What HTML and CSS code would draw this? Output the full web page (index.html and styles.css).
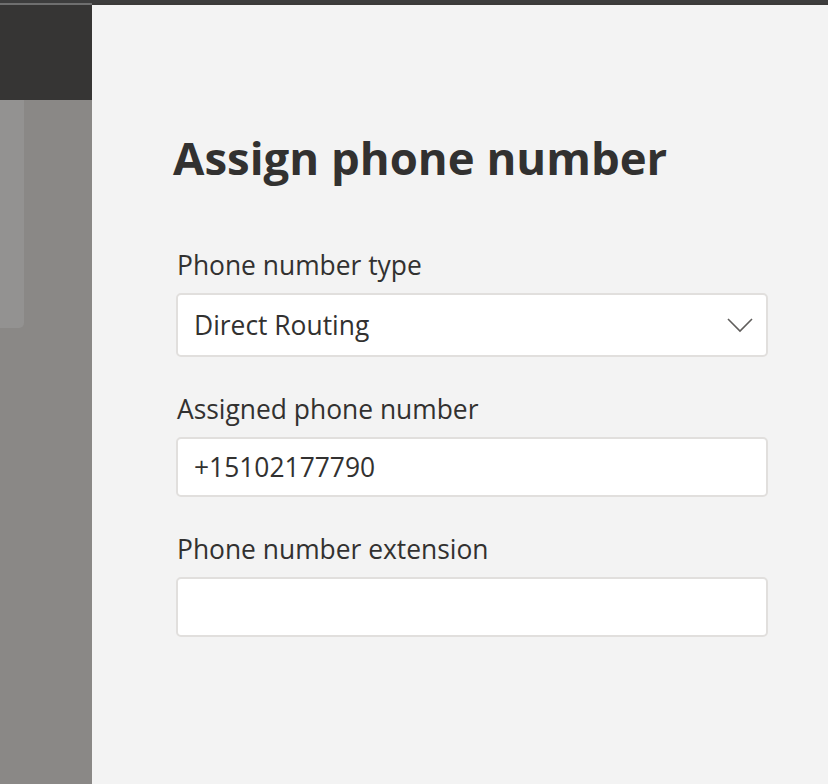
FILE: index.html
```html
<!DOCTYPE html>
<html>
<head>
<meta charset="utf-8">
<link rel="stylesheet" href="styles.css">
</head>
<body>
<div class="topbar"></div>
<div class="main">
  <div class="backdrop">
    <div class="back-header"></div>
    <div class="back-body">
      <div class="back-card"></div>
    </div>
  </div>
  <div class="panel">
    <h1 class="title">Assign phone number</h1>
    <div class="field field-first">
      <div class="label">Phone number type</div>
      <div class="box box-select">
        <span class="value">Direct Routing</span>
        <svg class="chev" width="26" height="16" viewBox="0 0 26 16"><path d="M1 2 L13 14 L25 2" fill="none" stroke="#605e5c" stroke-width="1.6"/></svg>
      </div>
    </div>
    <div class="field">
      <div class="label">Assigned phone number</div>
      <div class="box"><span class="value">+15102177790</span></div>
    </div>
    <div class="field">
      <div class="label">Phone number extension</div>
      <div class="box"></div>
    </div>
  </div>
</div>
</body>
</html>
```
FILE: styles.css
```css
html, body {
  margin: 0;
  padding: 0;
  height: 100%;
}
body {
  font-family: "Open Sans", "Noto Sans", sans-serif;
  color: #323130;
  background: #3b3a39;
  display: flex;
  flex-direction: column;
  overflow: hidden;
}
.topbar {
  height: 3px;
  background: #3d3d3d;
}
.main {
  flex: 1;
  display: flex;
}
.backdrop {
  width: 92px;
  display: flex;
  flex-direction: column;
  border-top: 2px solid #6f6f6f;
}
.back-header {
  height: 95px;
  background: #363534;
}
.back-body {
  flex: 1;
  background: #8a8886;
}
.back-card {
  width: 24px;
  height: 228px;
  background: #939291;
  border-bottom-right-radius: 5px;
}
.panel {
  flex: 1;
  background: #f3f3f3;
  margin-top: 2px;
  padding: 0 60px 0 84px;
}
.title {
  margin: 122px 0 0 -3px;
  font-size: 45.5px;
  font-weight: 700;
  line-height: 60px;
  color: #323130;
}
.field {
  margin-top: 34px;
}
.field-first {
  margin-top: 60px;
}
.label {
  font-size: 26.4px;
  line-height: 36px;
  margin-left: 1px;
  margin-bottom: 10px;
}
.box {
  box-sizing: border-box;
  height: 60px;
  background: #ffffff;
  border: 2px solid #e1dfdd;
  border-radius: 5px;
  display: flex;
  align-items: center;
  padding: 0 16px;
}
.box-select {
  height: 64px;
  justify-content: space-between;
  padding-right: 13px;
}
.value {
  font-size: 26.4px;
}
```
